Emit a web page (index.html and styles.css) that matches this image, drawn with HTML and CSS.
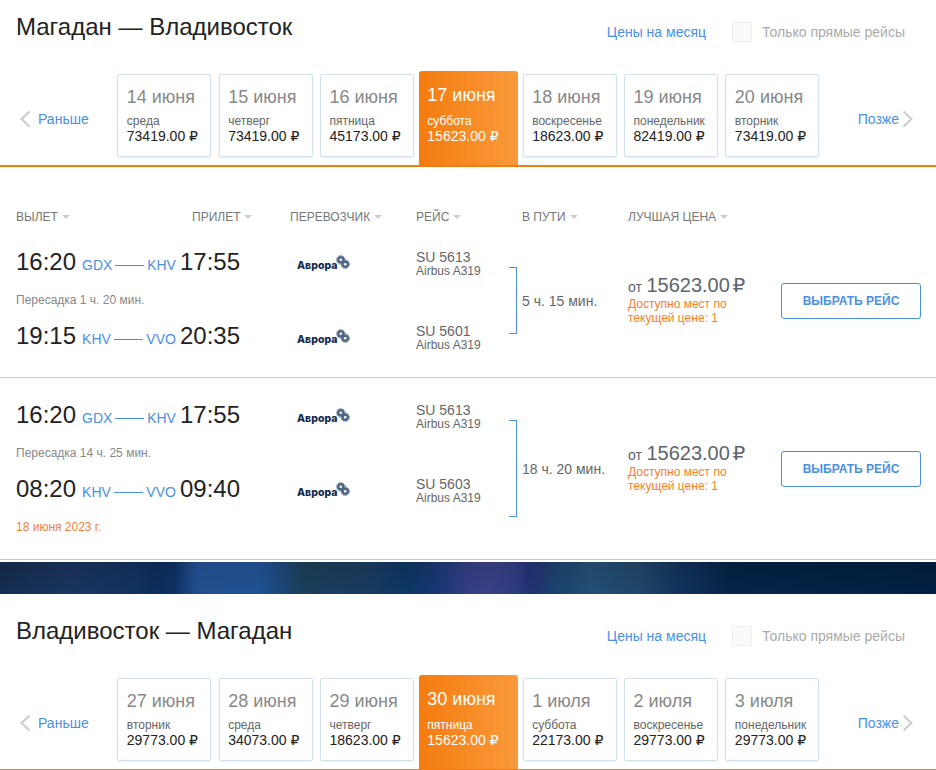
FILE: index.html
```html
<!DOCTYPE html>
<html lang="ru">
<head>
<meta charset="utf-8">
<title>Магадан — Владивосток</title>
<link rel="stylesheet" href="styles.css">
</head>
<body>
<section class="route">
  <header class="route-head">
    <h1 class="route-title">Магадан — Владивосток</h1>
    <div class="route-tools">
      <a class="month-link">Цены на месяц</a>
      <span class="check-box"></span>
      <span class="check-label">Только прямые рейсы</span>
    </div>
  </header>
  <nav class="tabs">
    <a class="nav nav-prev"><svg class="chev" viewBox="0 0 12 18"><path d="M10.5 1.5 2.5 9l8 7.5"/></svg>Раньше</a>
    <div class="cards">
      <div class="card"><div class="card-date">14 июня</div><div class="card-day">среда</div><div class="card-price">73419.00 <span class="rub">₽</span></div></div>
      <div class="card"><div class="card-date">15 июня</div><div class="card-day">четверг</div><div class="card-price">73419.00 <span class="rub">₽</span></div></div>
      <div class="card"><div class="card-date">16 июня</div><div class="card-day">пятница</div><div class="card-price">45173.00 <span class="rub">₽</span></div></div>
      <div class="card active"><div class="card-date">17 июня</div><div class="card-day">суббота</div><div class="card-price">15623.00 <span class="rub">₽</span></div></div>
      <div class="card"><div class="card-date">18 июня</div><div class="card-day">воскресенье</div><div class="card-price">18623.00 <span class="rub">₽</span></div></div>
      <div class="card"><div class="card-date">19 июня</div><div class="card-day">понедельник</div><div class="card-price">82419.00 <span class="rub">₽</span></div></div>
      <div class="card"><div class="card-date">20 июня</div><div class="card-day">вторник</div><div class="card-price">73419.00 <span class="rub">₽</span></div></div>
    </div>
    <a class="nav nav-next">Позже<svg class="chev" viewBox="0 0 12 18"><path d="M1.5 1.5 9.5 9l-8 7.5"/></svg></a>
  </nav>
</section>

<div class="table-head">
  <span class="sort">Вылет</span>
  <span class="sort">Прилет</span>
  <span class="sort">Перевозчик</span>
  <span class="sort">Рейс</span>
  <span class="sort">В пути</span>
  <span class="sort">Лучшая цена</span>
</div>

<article class="offer">
  <div class="segments segments-plain">
    <div class="segment">
      <div class="times"><span class="time">16:20</span><span class="code code-from">GDX</span><span class="line"></span><span class="code code-to">KHV</span><span class="time">17:55</span></div>
      <div class="carrier"><span class="logo-text">Аврора</span><svg class="gears" viewBox="0 0 14 14"><circle class="gear-teeth" cx="4.8" cy="4.8" r="4.2"/><circle class="gear-teeth" cx="9.2" cy="9.2" r="4.2"/><circle class="gear-body" cx="4.8" cy="4.8" r="3.8"/><circle class="gear-body" cx="9.2" cy="9.2" r="3.8"/><circle class="gear-hole" cx="4.8" cy="4.8" r="1.3"/><circle class="gear-hole" cx="9.2" cy="9.2" r="1.3"/></svg></div>
      <div class="flight"><div class="flight-no">SU 5613</div><div class="flight-plane">Airbus A319</div></div>
    </div>
    <div class="stop">Пересадка 1 ч. 20 мин.</div>
    <div class="segment">
      <div class="times"><span class="time">19:15</span><span class="code code-from">KHV</span><span class="line"></span><span class="code code-to">VVO</span><span class="time">20:35</span></div>
      <div class="carrier"><span class="logo-text">Аврора</span><svg class="gears" viewBox="0 0 14 14"><circle class="gear-teeth" cx="4.8" cy="4.8" r="4.2"/><circle class="gear-teeth" cx="9.2" cy="9.2" r="4.2"/><circle class="gear-body" cx="4.8" cy="4.8" r="3.8"/><circle class="gear-body" cx="9.2" cy="9.2" r="3.8"/><circle class="gear-hole" cx="4.8" cy="4.8" r="1.3"/><circle class="gear-hole" cx="9.2" cy="9.2" r="1.3"/></svg></div>
      <div class="flight"><div class="flight-no">SU 5601</div><div class="flight-plane">Airbus A319</div></div>
    </div>
  </div>
  <div class="bracket"></div>
  <div class="duration">5 ч. 15 мин.</div>
  <div class="price">
    <div class="price-main"><span class="price-from">от</span> 15623.00<span class="rub">₽</span></div>
    <div class="price-note">Доступно мест по<br>текущей цене: 1</div>
  </div>
  <button class="select">ВЫБРАТЬ РЕЙС</button>
</article>

<article class="offer">
  <div class="segments">
    <div class="segment">
      <div class="times"><span class="time">16:20</span><span class="code code-from">GDX</span><span class="line"></span><span class="code code-to">KHV</span><span class="time">17:55</span></div>
      <div class="carrier"><span class="logo-text">Аврора</span><svg class="gears" viewBox="0 0 14 14"><circle class="gear-teeth" cx="4.8" cy="4.8" r="4.2"/><circle class="gear-teeth" cx="9.2" cy="9.2" r="4.2"/><circle class="gear-body" cx="4.8" cy="4.8" r="3.8"/><circle class="gear-body" cx="9.2" cy="9.2" r="3.8"/><circle class="gear-hole" cx="4.8" cy="4.8" r="1.3"/><circle class="gear-hole" cx="9.2" cy="9.2" r="1.3"/></svg></div>
      <div class="flight"><div class="flight-no">SU 5613</div><div class="flight-plane">Airbus A319</div></div>
    </div>
    <div class="stop">Пересадка 14 ч. 25 мин.</div>
    <div class="segment">
      <div class="times"><span class="time">08:20</span><span class="code code-from">KHV</span><span class="line"></span><span class="code code-to">VVO</span><span class="time">09:40</span></div>
      <div class="carrier"><span class="logo-text">Аврора</span><svg class="gears" viewBox="0 0 14 14"><circle class="gear-teeth" cx="4.8" cy="4.8" r="4.2"/><circle class="gear-teeth" cx="9.2" cy="9.2" r="4.2"/><circle class="gear-body" cx="4.8" cy="4.8" r="3.8"/><circle class="gear-body" cx="9.2" cy="9.2" r="3.8"/><circle class="gear-hole" cx="4.8" cy="4.8" r="1.3"/><circle class="gear-hole" cx="9.2" cy="9.2" r="1.3"/></svg></div>
      <div class="flight"><div class="flight-no">SU 5603</div><div class="flight-plane">Airbus A319</div></div>
    </div>
    <div class="next-date">18 июня 2023 г.</div>
  </div>
  <div class="bracket"></div>
  <div class="duration">18 ч. 20 мин.</div>
  <div class="price">
    <div class="price-main"><span class="price-from">от</span> 15623.00<span class="rub">₽</span></div>
    <div class="price-note">Доступно мест по<br>текущей цене: 1</div>
  </div>
  <button class="select">ВЫБРАТЬ РЕЙС</button>
</article>

<div class="banner"></div>

<section class="route">
  <header class="route-head">
    <h1 class="route-title">Владивосток — Магадан</h1>
    <div class="route-tools">
      <a class="month-link">Цены на месяц</a>
      <span class="check-box"></span>
      <span class="check-label">Только прямые рейсы</span>
    </div>
  </header>
  <nav class="tabs">
    <a class="nav nav-prev"><svg class="chev" viewBox="0 0 12 18"><path d="M10.5 1.5 2.5 9l8 7.5"/></svg>Раньше</a>
    <div class="cards">
      <div class="card"><div class="card-date">27 июня</div><div class="card-day">вторник</div><div class="card-price">29773.00 <span class="rub">₽</span></div></div>
      <div class="card"><div class="card-date">28 июня</div><div class="card-day">среда</div><div class="card-price">34073.00 <span class="rub">₽</span></div></div>
      <div class="card"><div class="card-date">29 июня</div><div class="card-day">четверг</div><div class="card-price">18623.00 <span class="rub">₽</span></div></div>
      <div class="card active"><div class="card-date">30 июня</div><div class="card-day">пятница</div><div class="card-price">15623.00 <span class="rub">₽</span></div></div>
      <div class="card"><div class="card-date">1 июля</div><div class="card-day">суббота</div><div class="card-price">22173.00 <span class="rub">₽</span></div></div>
      <div class="card"><div class="card-date">2 июля</div><div class="card-day">воскресенье</div><div class="card-price">29773.00 <span class="rub">₽</span></div></div>
      <div class="card"><div class="card-date">3 июля</div><div class="card-day">понедельник</div><div class="card-price">29773.00 <span class="rub">₽</span></div></div>
    </div>
    <a class="nav nav-next">Позже<svg class="chev" viewBox="0 0 12 18"><path d="M1.5 1.5 9.5 9l-8 7.5"/></svg></a>
  </nav>
</section>
</body>
</html>
```
FILE: styles.css
```css
* { box-sizing: border-box; }
html, body { margin: 0; padding: 0; height: 770px; overflow: hidden; background: #fff; }
body { font-family: "Liberation Sans", Arial, sans-serif; color: #222; font-size: 14px; }

.rub { font-family: "DejaVu Sans", sans-serif; line-height: 1; }

.route-head { display: flex; justify-content: space-between; height: 71px; padding: 12px 31px 0 16px; }
.route-title { margin: 0; font-size: 24px; line-height: 30px; font-weight: 400; color: #222; }
.route-tools { display: flex; align-items: center; height: 20px; margin-top: 10px; }
.month-link { color: #4a90e2; margin-right: 26px; }
.check-box { width: 20px; height: 20px; background: #fafafa; border: 1px solid #eee; margin-right: 10px; }
.check-label { color: #aaa; }

.tabs { display: flex; height: 96px; border-bottom: 2px solid #f57c0f; padding: 0 22px 0 19px; }
.nav { display: flex; align-items: center; height: 94px; padding-top: 1px; color: #4a90e2; }
.nav-prev { width: 98.3px; }
.nav-next { margin-left: auto; }
.chev { width: 12px; height: 18px; fill: none; stroke: #ccc; stroke-width: 2; }
.nav-prev .chev { margin-right: 7px; }
.nav-next .chev { margin-left: 3px; }

.cards { display: flex; gap: 7.35px; }
.card { width: 94px; height: 83px; margin-top: 3px; padding: 12px 0 0 8.5px; border: 1px solid #d3e0f0; border-radius: 2px; box-shadow: 0 1px 2px rgba(120,150,190,.15); }
.card-date { font-size: 18px; line-height: 20px; color: #888; }
.card-day { margin-top: 7px; font-size: 12px; line-height: 15px; color: #666; }
.card-price { font-size: 14px; line-height: 15px; color: #222; white-space: nowrap; }
.card.active { width: 99px; height: 94px; margin: 0 -2.5px; padding: 14px 0 0 8.5px; border: 0; border-radius: 3px 3px 0 0; box-shadow: none; background: linear-gradient(90deg, #f57c0f, #f99a3c); }
.card.active .card-date { color: #fff; }
.card.active .card-day { color: #fff; margin-top: 9px; }
.card.active .card-price { color: #fff; }

.table-head { display: grid; grid-template-columns: 176px 98px 126px 106px 106px auto; margin-top: 43px; padding: 0 0 1px 16px; font-size: 12px; line-height: 14px; color: #777; text-transform: uppercase; }
.sort::after { content: ""; display: inline-block; margin-left: 4px; vertical-align: 2px; border-left: 4px solid transparent; border-right: 4px solid transparent; border-top: 4px solid #ccc; }

.offer { display: flex; align-items: center; padding: 15px 15px 15px 16px; border-bottom: 1px solid #c3ced9; }
.offer + .offer { padding-bottom: 14px; }
.segments { width: 493px; }
.segments-plain { padding-bottom: 4px; }
.segment { display: flex; height: 44px; }
.times { display: flex; align-items: center; width: 224px; }
.time { font-size: 24px; color: #222; }
.code { padding-top: 6px; font-size: 14px; color: #4a90e2; }
.code-from { margin-left: 6px; }
.code-to { margin-right: 4px; }
.line { flex: 1; height: 1px; margin: 7px 3px 0; background: #4a90e2; }
.carrier { display: flex; align-items: center; width: 176px; padding: 6px 0 0 57px; }
.logo-text { font-family: Inter, "Liberation Sans", sans-serif; font-size: 10.5px; font-weight: 800; color: #14294b; }
.gears { width: 14px; height: 14px; margin: -6px 0 0 -1px; }
.gear-teeth { fill: none; stroke: #4f6782; stroke-width: .9; stroke-dasharray: 1.6 .8; }
.gear-body { fill: #4f6782; }
.gear-hole { fill: #fff; }
.flight { padding-top: 10px; }
.flight-no { font-size: 14px; line-height: 14px; color: #666; }
.flight-plane { font-size: 12px; line-height: 14px; color: #666; }
.stop { height: 30px; padding-top: 9px; font-size: 12px; line-height: 14px; color: #888; }
.next-date { height: 34px; padding-top: 9px; font-size: 12px; line-height: 14px; color: #f0803c; }

.bracket { align-self: stretch; width: 8px; margin: 27px 0 28px; border: 1px solid #4a90e2; border-left: 0; }
.duration { width: 111px; padding-left: 5px; color: #666; }
.price { width: 153px; padding-bottom: 3px; }
.price-main { font-size: 20px; line-height: 22px; color: #5c6670; white-space: nowrap; }
.price-main .rub { margin-left: 2.5px; }
.price-from { font-size: 14px; margin-right: -1px; }
.price-note { margin-top: -1px; font-size: 12px; line-height: 14px; color: #f5811f; }
.select { width: 140px; height: 36px; padding: 0; background: #fff; border: 1px solid #4a90e2; border-radius: 3px; color: #4a90e2; font: 700 12px "Liberation Sans", Arial, sans-serif; }

.banner { height: 32px; margin: 2px 0 10px; background: linear-gradient(180deg, rgba(0,0,0,.06), rgba(20,90,170,.08)), linear-gradient(90deg, #14294a 0, #1a3258 70px, #10305a 135px, #0b2a55 155px, #0d2f60 175px, #234f8e 197px, #205090 260px, #1d4470 285px, #1a3d55 302px, #18395a 370px, #0c3460 408px, #1a3570 440px, #353c7f 468px, #3a3f80 490px, #2f3b7e 515px, #232e6d 530px, #1a4268 558px, #254d70 590px, #204464 640px, #0f3055 682px, #042142 730px, #021c3c 936px); }
```
